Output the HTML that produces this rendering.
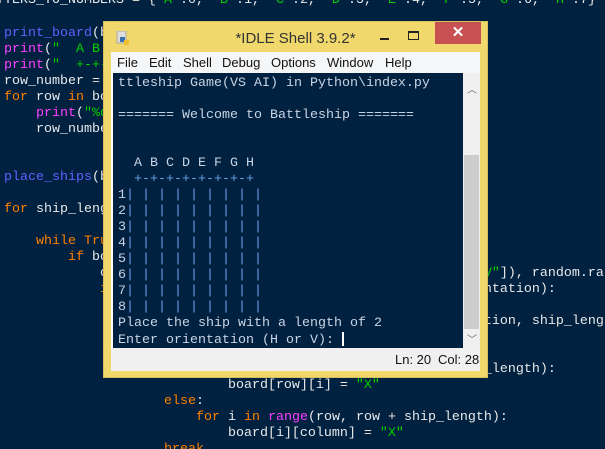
<!DOCTYPE html>
<html><head><meta charset="utf-8"><style>
*{margin:0;padding:0;box-sizing:border-box}
html,body{width:605px;height:449px;overflow:hidden}
body{background:#002240;position:relative;font-family:"Liberation Mono",monospace;}
.l{position:absolute;left:4px;height:16px;line-height:16px;font-size:13.33px;white-space:pre;color:#e8e8e8}
.k{color:#ff8000}.b{color:#ff40ff}.s{color:#00d000}.d{color:#6060ff}
#win{position:absolute;left:103px;top:21px;width:385px;height:357px;background:#f0d86c;border:1px solid #d8c060}
#title{position:absolute;left:0;right:0;top:8px;text-align:center;font:15px "Liberation Sans",sans-serif;color:#333}
#close{position:absolute;left:331px;top:0;width:46px;height:22px;background:#c75050;color:#fff;font:bold 15px "Liberation Sans",sans-serif;text-align:center;line-height:22px}
#max{position:absolute;left:304px;top:9px;width:11px;height:9px;border:1px solid #222;border-top-width:2px}
#min{position:absolute;left:276px;top:16px;width:9px;height:2px;background:#222}
#menu{position:absolute;left:7px;top:30px;width:369px;height:21px;background:#f5f6f7;font:13px "Liberation Sans",sans-serif;color:#111}
#menu span{position:absolute;top:3px}
#txt{position:absolute;left:7px;top:51px;width:352px;height:275px;background:#002240;border-left:2px solid #fff;overflow:hidden}
#txt .t{position:absolute;left:5px;font-size:13.33px;line-height:16px;white-space:pre;color:#c8d4e4}
#sb{position:absolute;left:359px;top:51px;width:17px;height:275px;background:#f0f0f0}
#thumb{position:absolute;left:1px;top:82px;width:15px;height:174px;background:#cdcdcd}
#st{position:absolute;left:7px;top:326px;width:369px;height:23px;background:#f0f0f0;font:13px "Liberation Sans",sans-serif;color:#111}
</style></head><body>
<div class="l" style="top:-7px;left:-20px">LETTERS_TO_NUMBERS = {<span class="s">"A"</span>:0, <span class="s">"B"</span>:1, <span class="s">"C"</span>:2, <span class="s">"D"</span>:3, <span class="s">"E"</span>:4, <span class="s">"F"</span>:5, <span class="s">"G"</span>:6, <span class="s">"H"</span>:7}</div>
<div class="l" style="top:26px"><span class="d">print_board</span>(b</div>
<div class="l" style="top:42px"><span class="b">print</span>(<span class="s">"  A B</span></div>
<div class="l" style="top:58px"><span class="b">print</span>(<span class="s">"  +-+-</span></div>
<div class="l" style="top:74px">row_number = </div>
<div class="l" style="top:90px"><span class="k">for</span> row <span class="k">in</span> bo</div>
<div class="l" style="top:106px">    <span class="b">print</span>(<span class="s">"%d</span></div>
<div class="l" style="top:122px">    row_number</div>
<div class="l" style="top:170px"><span class="d">place_ships</span>(b</div>
<div class="l" style="top:202px"><span class="k">for</span> ship_leng</div>
<div class="l" style="top:234px">    <span class="k">while</span> <span class="k">True</span></div>
<div class="l" style="top:250px">        <span class="k">if</span> bo</div>
<div class="l" style="top:266px">            c                                               <span class="s">V"</span>]), random.rand</div>
<div class="l" style="top:282px">            <span class="k">i</span>                                               ntation):</div>
<div class="l" style="top:314px">                                                           ation, ship_leng</div>
<div class="l" style="top:362px">                                                            _length):</div>
<div class="l" style="top:378px">                            board[row][i] = <span class="s">"X"</span></div>
<div class="l" style="top:394px">                    <span class="k">else</span>:</div>
<div class="l" style="top:410px">                        <span class="k">for</span> i <span class="k">in</span> <span class="b">range</span>(row, row + ship_length):</div>
<div class="l" style="top:426px">                            board[i][column] = <span class="s">"X"</span></div>
<div class="l" style="top:442px">                    <span class="k">break</span></div>

<div id="win">
 <svg style="position:absolute;left:12px;top:9px" width="14" height="16"><rect x="1" y="0" width="9" height="12" fill="#ddd" stroke="#aaa"/><rect x="4" y="6" width="5" height="5" fill="#3a70b0"/><rect x="8" y="9" width="5" height="5" fill="#f0c030"/></svg>
 <div id="title">*IDLE Shell 3.9.2*</div>
 <div id="min"></div><div id="max"></div>
 <div id="close">✕</div>
 <div id="menu"><span style="left:6px">File</span><span style="left:38px">Edit</span><span style="left:72px">Shell</span><span style="left:111px">Debug</span><span style="left:160px">Options</span><span style="left:216px">Window</span><span style="left:274px">Help</span></div>
 <div id="txt"><div class="t" style="top:3px">ttleship Game(VS AI) in Python\index.py

======= Welcome to Battleship =======


  A B C D E F G H
  <span style="color:#6aa0e8">+-+-+-+-+-+-+-+</span>
1<span style="color:#6aa0e8">| | | | | | | | |</span>
2<span style="color:#6aa0e8">| | | | | | | | |</span>
3<span style="color:#6aa0e8">| | | | | | | | |</span>
4<span style="color:#6aa0e8">| | | | | | | | |</span>
5<span style="color:#6aa0e8">| | | | | | | | |</span>
6<span style="color:#6aa0e8">| | | | | | | | |</span>
7<span style="color:#6aa0e8">| | | | | | | | |</span>
8<span style="color:#6aa0e8">| | | | | | | | |</span>
Place the ship with a length of 2
Enter orientation (H or V): <span style="display:inline-block;width:2px;height:14px;background:#fff;vertical-align:-3px"></span></div></div>
 <div id="sb"><div style="position:absolute;left:4px;top:8px;font:10px 'Liberation Sans';color:#666">︿</div><div id="thumb"></div><div style="position:absolute;left:4px;top:258px;font:10px 'Liberation Sans';color:#666">﹀</div></div>
 <div id="st"><span style="position:absolute;left:284px;top:4px">Ln: 20</span><span style="position:absolute;left:327px;top:4px">Col: 28</span></div>
</div>
</body></html>
